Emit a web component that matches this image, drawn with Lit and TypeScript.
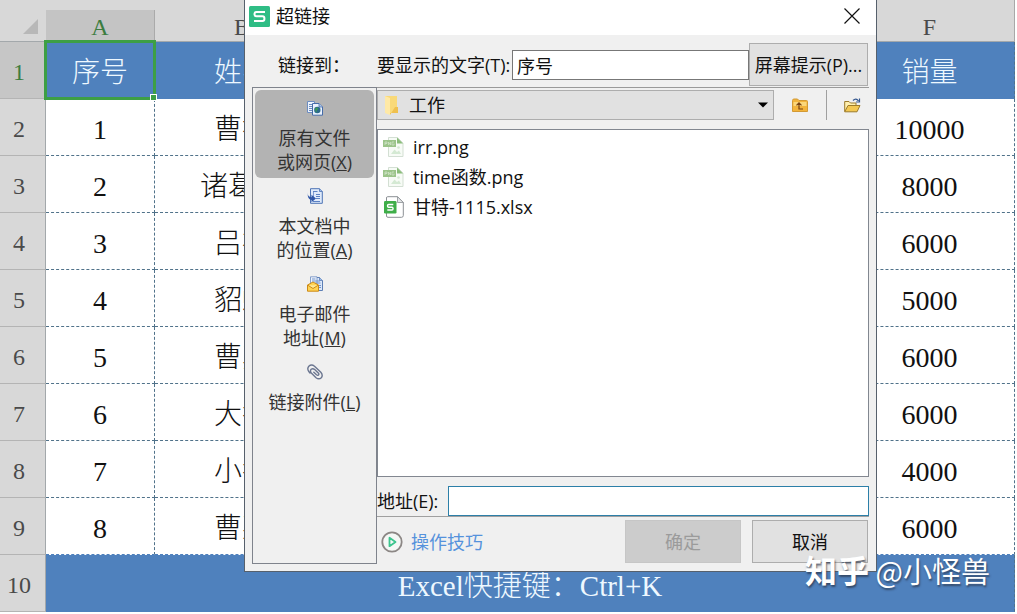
import { LitElement, html, css, svg } from "lit";
import { customElement } from "lit/decorators.js";
import { classMap } from "lit/directives/class-map.js";

const fileIcon = (kind: string) =>
  kind === "png"
    ? svg`<svg width="22" height="22" viewBox="0 0 22 22">
        <path d="M5.500 1.500H14.500L20 7V20.500H5.500Z" fill="#f7fbf6" stroke="#d3dfd3"/>
        <path d="M14 1.500V7.500H20Z" fill="#8bbd7b"/>
        <path d="M8 18L11.500 13.500L14 16L16 14.500L18 18Z" fill="#d4e9d3"/>
        <circle cx="15.500" cy="11.500" r="1.300" fill="#d4e9d3"/>
        <rect x="0" y="4" width="13" height="7" fill="#9cc48a"/>
        <path d="M2 9V6H4V7.500H2M5.500 9V6L7.500 9V6M11 6H9V9H11V7.500" fill="none" stroke="#cfe3c6" stroke-width=".8"/>
      </svg>`
    : svg`<svg width="22" height="22" viewBox="0 0 22 22">
        <path d="M4.500 .7H14.500L20.300 6.500V19.500Q20.300 21.300 18.500 21.300H5Q3.500 21.300 3.500 20V2Q3.500 .7 4.500 .7Z" fill="#fff" stroke="#8b8f94"/>
        <path d="M14.500 .7V6.500H20.300Z" fill="#e4e6e8" stroke="#8b8f94" stroke-width=".8"/>
        <rect x="1" y="5" width="12.500" height="12.500" rx="1.200" fill="#3fae49"/>
        <path d="M10.300 8.500H5.600Q4.600 8.500 4.600 9.500V10.300Q4.600 11.200 5.600 11.200H9Q10 11.200 10 12.200V13Q10 14 9 14H4.300" fill="none" stroke="#fff" stroke-width="1.400"/>
      </svg>`;

const page = svg`
  <path d="M5.500 1.500H12.500L15.500 4.500V14.500H5.500Z" fill="#dce8fa" stroke="#5d7fb5"/>
  <path d="M12.500 1.500V4.500H15.500" fill="#9dbbe6" stroke="#5d7fb5" stroke-width=".8"/>`;

const navIcons = {
  web: svg`<svg width="16" height="16" viewBox="0 0 16 16">
      <path d="M.500 1.500H7.500V12.500H.500Z" fill="#eef4fd" stroke="#6d8dc0"/>
      <path d="M2 4.500H5M2 6.500H5M2 8.500H5M2 10.500H5" stroke="#6d8dc0"/>
      <path d="M5.500 3.500H12L15.500 7V15.200H5.500Z" fill="#eaf2fd" stroke="#466ca8"/>
      <path d="M12 3.500V7H15.500" fill="#a9c5ef" stroke="#466ca8" stroke-width=".8"/>
      <circle cx="10.300" cy="10" r="3.200" fill="#2b6a8c"/>
      <path d="M8 9Q10 6.500 11 8.500Q11 10 9.500 10.500Q10 12 9 12.500Z" fill="#3f9b54"/>
    </svg>`,
  place: svg`<svg width="16" height="16" viewBox="0 0 16 16">
      <path d="M3.500 .7H12.500L15.300 3.500V15.300H3.500Z" fill="#dfeafb" stroke="#4e74b5"/>
      <path d="M12.500 .7V3.500H15.300" fill="#9fbdea" stroke="#4e74b5" stroke-width=".8"/>
      <path d="M6 3.500H10.500M9 6.500H13M9 8.500H13M9 10.500H13M6 13.500H13" stroke="#5c82c4"/>
      <path d="M6.500 4V12" stroke="#7d9bd3"/>
      <path d="M.700 4.500Q.500 9 4.500 9.200V6.800L9 10.500L4.500 14.300V12Q.300 11.500 .700 4.500Z" fill="#2f56a8"/>
    </svg>`,
  mail: svg`<svg width="16" height="16" viewBox="0 0 16 16">
      ${page}
      <path d="M3.500 .800H10V8H3.500Z" fill="#eef4fd" stroke="#6d8dc0" stroke-width=".8"/>
      <path d="M5 3H8.500M5 5H13M8 7H13.500M12 9.500H14M12 11.500H14" stroke="#7193cb"/>
      <path d="M.500 9L6 6L11.500 9V15.200H.500Z" fill="#ffd353" stroke="#cc8a16"/>
      <path d="M.800 9.200L6 12.500L11.200 9.200" fill="#ffe997" stroke="#cc8a16"/>
    </svg>`,
  clip: svg`<svg width="16" height="16" viewBox="0 0 16 16" fill="none" stroke-linecap="round">
      <path d="M3 9L1.800 7.500Q-.2 4.500 1.800 2.200Q4.500 -.2 7.500 2.200L13.800 8.300Q16.300 11.200 14.300 13.700Q12 15.900 9 13.800L4.300 9Q2.700 6.800 4.200 5.300Q5.800 4 7.700 5.500L11.500 9.200Q12.300 10.500 11.300 11.200Q10.500 11.600 9.500 10.800L6.800 8.200" stroke="#6b7690" stroke-width="1.400"/>
    </svg>`,
};

const navItems = [
  { icon: navIcons.web, lines: ["原有文件", "或网页"], key: "X", active: true },
  { icon: navIcons.place, lines: ["本文档中", "的位置"], key: "A", active: false },
  { icon: navIcons.mail, lines: ["电子邮件", "地址"], key: "M", active: false },
  { icon: navIcons.clip, lines: ["链接附件"], key: "L", active: false },
];

const files = [
  { name: "irr.png", kind: "png" },
  { name: "time函数.png", kind: "png" },
  { name: "甘特-1115.xlsx", kind: "xlsx" },
];

const rows: [string, string, string][] = [
  ["1", "曹操", "10000"],
  ["2", "诸葛亮", "8000"],
  ["3", "吕布", "6000"],
  ["4", "貂蝉", "5000"],
  ["5", "曹真", "6000"],
  ["6", "大乔", "6000"],
  ["7", "小乔", "4000"],
  ["8", "曹丕", "6000"],
];

@customElement("sheet-grid")
export class SheetGrid extends LitElement {
  static styles = css`
    :host {
      display: block;
      padding-right: 2px;
      background: #fff;
      font-family: "Liberation Serif", "Noto Sans CJK SC", serif;
      font-weight: 300;
    }
    .sheet {
      width: 100%;
      table-layout: fixed;
      border-collapse: separate;
      border-spacing: 0;
      background: #fff;
    }
    .c-num { width: 46px; }
    .c-a { width: 109px; }
    .c-b { width: 174px; }
    .c-f { width: 170px; }
    th, td {
      box-sizing: border-box;
      padding: 0;
      text-align: center;
      font-weight: 300;
    }
    .letters th {
      height: 42px;
      background: #d8d8d8;
      border-bottom: 1px solid #a3a8ab;
      color: #4a4a4a;
      font-size: 24px;
      line-height: 31px;
      vertical-align: bottom;
    }
    .letters th:last-child { border-right: 1px solid #a8a8a8; }
    .letter { display: block; height: 31px; padding-top: 2px; box-sizing: border-box; }
    .letters .picked { color: #3c7d3f; }
    .picked .letter { background: #c4c4c4; border-right: 1px solid #aaa; }
    .corner { display: block; margin: 0 0 7px 23px; width: 15px; height: 15px; }
    .num {
      height: 57px;
      padding: 5px 7px 0 0;
      background: #d8d8d8;
      border-right: 1px solid #a3a8ab;
      border-bottom: 1px solid #b4b4b4;
      color: #4a4a4a;
      font-size: 24px;
    }
    .num.picked { background: #c6c6c6; color: #3c7d3f; }
    td {
      height: 57px;
      padding-top: 5px;
      border-bottom: 1px dashed #50728a;
      color: #111;
      font-size: 28px;
      line-height: 40px;
      white-space: nowrap;
    }
    .a, .f { border-right: 1px dashed #50728a; }
    .head td, .foot td { background: #4f81bd; color: #eef8ff; border-bottom-color: #4f81bd; }
    .before-foot td { border-bottom-color: #4f81bd; }
    .foot td { border-right: 1px dashed #50728a; font-size: 29px; }
    .cell { position: relative; }
    .frame {
      position: absolute;
      inset: -2px -2px -2px -2px;
      border: 3px solid #3d9f45;
    }
    .handle {
      position: absolute;
      right: -4px;
      bottom: -4px;
      width: 5px;
      height: 5px;
      border: 1px solid #fff;
      background: #3d9f45;
    }
  `;

  render() {
    return html`
      <table class="sheet">
        <colgroup>
          <col class="c-num" /><col class="c-a" /><col class="c-b" /><col /><col class="c-f" />
        </colgroup>
        <thead>
          <tr class="letters">
            <th>
              <svg class="corner" viewBox="0 0 15 15"><path d="M15 0V15H0Z" fill="#b8b8b8" /></svg>
            </th>
            <th class="picked"><span class="letter">A</span></th>
            <th><span class="letter">B</span></th>
            <th></th>
            <th><span class="letter">F</span></th>
          </tr>
        </thead>
        <tbody>
          <tr class="head">
            <th class="num picked">1</th>
            <td class="a cell">序号<div class="frame"><div class="handle"></div></div></td>
            <td>姓名</td>
            <td></td>
            <td class="f">销量</td>
          </tr>
          ${rows.map(
            ([id, name, sales], i) => html`
              <tr class=${classMap({ "before-foot": i === rows.length - 1 })}>
                <th class="num">${i + 2}</th>
                <td class="a">${id}</td>
                <td>${name}</td>
                <td></td>
                <td class="f">${sales}</td>
              </tr>
            `
          )}
          <tr class="foot">
            <th class="num">10</th>
            <td colspan="4">Excel快捷键：Ctrl+K</td>
          </tr>
        </tbody>
      </table>
    `;
  }
}

@customElement("link-dialog")
export class LinkDialog extends LitElement {
  static styles = css`
    :host {
      display: block;
      box-sizing: border-box;
      border: 1px solid #56606c;
      border-top: 0;
      background: #f0f0f0;
      color: #111;
      font-family: "Open Sans", "Noto Sans CJK SC", sans-serif;
      font-size: 18px;
      line-height: 24px;
    }
    button, input, select { font: inherit; color: inherit; box-sizing: border-box; margin: 0; }
    button { padding: 0; cursor: default; }
    svg { display: block; flex: none; }
    .title {
      display: flex;
      align-items: center;
      gap: 6px;
      height: 35px;
      padding: 0 12px 3px 4px;
      box-sizing: border-box;
      background: #fff;
    }
    .name { flex: 1; font: inherit; margin: 0; }
    .close { border: 0; background: none; width: 24px; height: 24px; display: grid; place-items: center; }
    .top {
      display: grid;
      grid-template-columns: 99px 135px 1fr 119px;
      align-items: center;
      padding: 8px 8px 1px 33px;
      white-space: nowrap;
    }
    .field {
      min-width: 0;
      width: 100%;
      height: 30px;
      padding: 0 4px;
      border: 1px solid #777;
      border-radius: 0;
      background: #fff;
      outline: none;
    }
    .push { border: 1px solid #adadad; background: #e1e1e1; height: 43px; border-radius: 0; }
    .push[disabled] { border-color: #c6c6c6; background: #ccc; color: #9b9b9b; }
    .body {
      display: grid;
      grid-template-columns: 125px minmax(0, 1fr);
      padding: 0 7px 7px;
    }
    .nav { border: 1px solid #7f838c; padding: 2px; display: flex; flex-direction: column; }
    .item {
      display: flex;
      flex-direction: column;
      align-items: center;
      gap: 10px;
      padding: 10px 0 4px;
      border: 0;
      border-radius: 6px;
      background: none;
      color: #333;
    }
    .item.active { background: #b3b3b3; }
    .main { display: flex; flex-direction: column; border-top: 1px solid #9a9a9a; padding-top: 2px; }
    .bar { display: flex; align-items: center; }
    .combo { flex: 1; display: grid; align-items: center; }
    .combo > * { grid-area: 1 / 1; }
    .folder { margin-left: 6px; z-index: 1; pointer-events: none; }
    .arrow { justify-self: end; margin-right: 6px; z-index: 1; pointer-events: none; }
    .pick {
      appearance: none;
      width: 100%;
      height: 30px;
      padding: 0 24px 0 31px;
      border: 1px solid #adadad;
      border-radius: 0;
      background: #e1e1e1;
    }
    .tool { width: 52px; height: 30px; border: 0; background: none; display: grid; place-items: center; }
    .tool + .tool { width: 43px; border-left: 1px solid #a0a0a0; padding-left: 8px; }
    .files {
      box-sizing: border-box;
      min-height: 348px;
      margin: 9px 0;
      padding: 2px 5px;
      border: 1px solid #828790;
      background: #fff;
      list-style: none;
    }
    .file { display: flex; align-items: center; gap: 8px; height: 30px; }
    .address { display: grid; grid-template-columns: 71px 1fr; align-items: center; border-bottom: 1px solid #a0a0a0; }
    .address .field { border-color: #2c7fa8; }
    .actions { display: grid; grid-template-columns: 1fr 116px 116px; gap: 11px; padding: 3px 1px 1px 4px; align-items: center; }
    .tips { display: flex; align-items: center; gap: 8px; color: #5592dc; text-decoration: none; }
  `;

  render() {
    return html`
      <header class="title">
        <svg width="21" height="21" viewBox="0 0 21 21">
          <rect width="21" height="21" rx="1.500" fill="#2fbd85" />
          <path d="M16 6H7.500Q5.500 6 5.500 7.800V8.500Q5.500 10.300 7.500 10.300H13.500Q15.400 10.300 15.400 12.200V13Q15.400 15 13.500 15H5" fill="none" stroke="#fff" stroke-width="2" />
        </svg>
        <h1 class="name">超链接</h1>
        <button class="close" aria-label="关闭">
          <svg width="16" height="16" viewBox="0 0 16 16"><path d="M.500 .500L15.500 15.500M15.500 .500L.500 15.500" stroke="#111" stroke-width="1.200" /></svg>
        </button>
      </header>
      <div class="top">
        <span>链接到：</span>
        <label for="shown">要显示的文字(T):</label>
        <input id="shown" class="field" .value=${"序号"} />
        <button class="push">屏幕提示(P)...</button>
      </div>
      <div class="body">
        <nav class="nav">
          ${navItems.map(
            (n) => html`
              <button class=${classMap({ item: true, active: n.active })}>
                ${n.icon}
                <span>
                  ${n.lines.map((line, i) =>
                    i === n.lines.length - 1 ? html`${line}(<u>${n.key}</u>)` : html`${line}<br />`
                  )}
                </span>
              </button>
            `
          )}
        </nav>
        <div class="main">
          <div class="bar">
            <div class="combo">
              <svg class="folder" width="18" height="20" viewBox="0 0 18 20">
                <path d="M2 1H14V18H2Z" fill="#f9d978" />
                <path d="M2 1L7 3V20L2 18Z" fill="#ffe9a6" />
                <path d="M12 12H15V18H7V20" fill="#efc04f" />
              </svg>
              <select class="pick" aria-label="文件夹"><option>工作</option></select>
              <svg class="arrow" width="10" height="6" viewBox="0 0 10 6"><path d="M0 .500H10L5 5.500Z" fill="#000" /></svg>
            </div>
            <button class="tool" aria-label="上一级">
              <svg width="16" height="14" viewBox="0 0 16 14">
                <path d="M.500 2.500Q.500 1 2 1H5.500L7 2.500H14.500Q15.500 2.500 15.500 3.500V13.500H.500Z" fill="#f3b43c" stroke="#d39a35" />
                <path d="M1.500 4H14.500V8H1.500Z" fill="#fbd77b" />
                <path d="M7 11.500V5M4.500 7.300L7 4.800L9.500 7.300M7 11H11" fill="none" stroke="#7a4212" stroke-width="1.200" />
              </svg>
            </button>
            <button class="tool" aria-label="浏览">
              <svg width="17" height="15" viewBox="0 0 17 15">
                <path d="M.700 13.500V3.500H5L6.500 5H12V8" fill="#fff0b0" stroke="#9c7b2b" />
                <path d="M.700 13.800L4 7.500H16L13 13.800Z" fill="#f3c852" stroke="#9c7b2b" />
                <path d="M9 2.500Q12 -.500 14.500 3M15.500 .500V4H12" fill="none" stroke="#35588f" stroke-width="1.200" />
              </svg>
            </button>
          </div>
          <ul class="files">
            ${files.map((f) => html`<li class="file">${fileIcon(f.kind)}<span>${f.name}</span></li>`)}
          </ul>
          <div class="address">
            <label for="addr">地址(E):</label>
            <input id="addr" class="field" />
          </div>
          <div class="actions">
            <a class="tips" href="#tips">
              <svg width="22" height="22" viewBox="0 0 22 22">
                <circle cx="11" cy="11" r="9.700" fill="#f5f8f6" stroke="#8c8785" stroke-width="1.800" />
                <path d="M8.500 6.800V15.200L14.500 11Z" fill="none" stroke="#3cc58e" stroke-width="1.800" stroke-linejoin="round" />
              </svg>
              操作技巧
            </a>
            <button class="push" disabled>确定</button>
            <button class="push">取消</button>
          </div>
        </div>
      </div>
    `;
  }
}

@customElement("app-root")
export class AppRoot extends LitElement {
  static styles = css`
    :host {
      display: block;
      position: relative;
      min-height: 100vh;
      overflow: hidden;
      background: #fff;
    }
    .dialog { position: absolute; top: 0; left: 244px; right: 140px; }
    .mark {
      position: absolute;
      right: 27px;
      bottom: 24px;
      color: #fff;
      font-family: "Noto Sans CJK SC", sans-serif;
      font-size: 29px;
      line-height: 40px;
      text-shadow: 1px 2px 2px rgba(40, 50, 70, 0.7);
      white-space: nowrap;
    }
    .brand { font-weight: 700; font-size: 32px; }
  `;

  render() {
    return html`
      <sheet-grid></sheet-grid>
      <link-dialog class="dialog" role="dialog" aria-label="超链接"></link-dialog>
      <div class="mark"><span class="brand">知乎</span> @小怪兽</div>
    `;
  }
}
